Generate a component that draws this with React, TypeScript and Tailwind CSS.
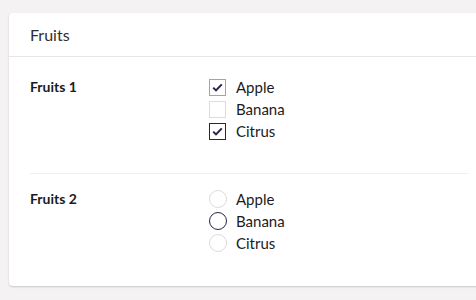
import React, { useState } from "react";

const fruits = ["Apple", "Banana", "Citrus"];

function Check({ checked, focus }: { checked: boolean; focus?: boolean }) {
  const border = focus ? "border-[#23254a]" : checked ? "border-[#a3a3a8]" : "border-[#dcdcdc]";
  return (
    <span className={`flex h-[17px] w-[17px] items-center justify-center border ${border} bg-white`}>
      {checked && (
        <svg width="11" height="9" viewBox="0 0 11 9">
          <path d="M1.2 4.6 L4 7.4 L9.8 1.4" fill="none" stroke="#23254a" strokeWidth="2" />
        </svg>
      )}
    </span>
  );
}

function Radio({ focus }: { focus?: boolean }) {
  return (
    <span
      className={`h-[18px] w-[18px] rounded-full border ${
        focus ? "border-[#23254a] border-[1.5px]" : "border-[#dcdcdc]"
      } bg-white`}
    />
  );
}

export default function App() {
  const [picked] = useState<Record<string, boolean>>({ Apple: true, Banana: false, Citrus: true });

  return (
    <div className="min-h-[300px] bg-[#f4f2f2] pl-[9px] pt-[13px] font-['Lato',sans-serif] text-[#1b1b1f]">
      <div className="w-[480px] rounded-[4px] bg-white shadow-[0_1px_2px_rgba(0,0,0,0.18)]">
        <div className="flex h-[44px] items-center border-b border-[#e6e6e6] px-[21px] text-[16px] text-[#2e2e33]">
          Fruits
        </div>
        <div className="px-[21px]">
          <div className="flex pt-[19px] pb-[31px] border-b border-[#efefef]">
            <div className="w-[179px] pt-[1px] text-[14px] font-bold leading-[20px]">Fruits 1</div>
            <div className="flex flex-col">
              {fruits.map((f) => (
                <label key={f} className="flex h-[22px] items-center gap-[10px] text-[15px]">
                  <Check checked={picked[f]} focus={f === "Citrus"} />
                  <span>{f}</span>
                </label>
              ))}
            </div>
          </div>
          <div className="flex pt-[14px] pb-[32px]">
            <div className="w-[179px] pt-[1px] text-[14px] font-bold leading-[20px]">Fruits 2</div>
            <div className="flex flex-col">
              {fruits.map((f) => (
                <label key={f} className="flex h-[22px] items-center gap-[9px] text-[15px]">
                  <Radio focus={f === "Banana"} />
                  <span>{f}</span>
                </label>
              ))}
            </div>
          </div>
        </div>
      </div>
    </div>
  );
}
